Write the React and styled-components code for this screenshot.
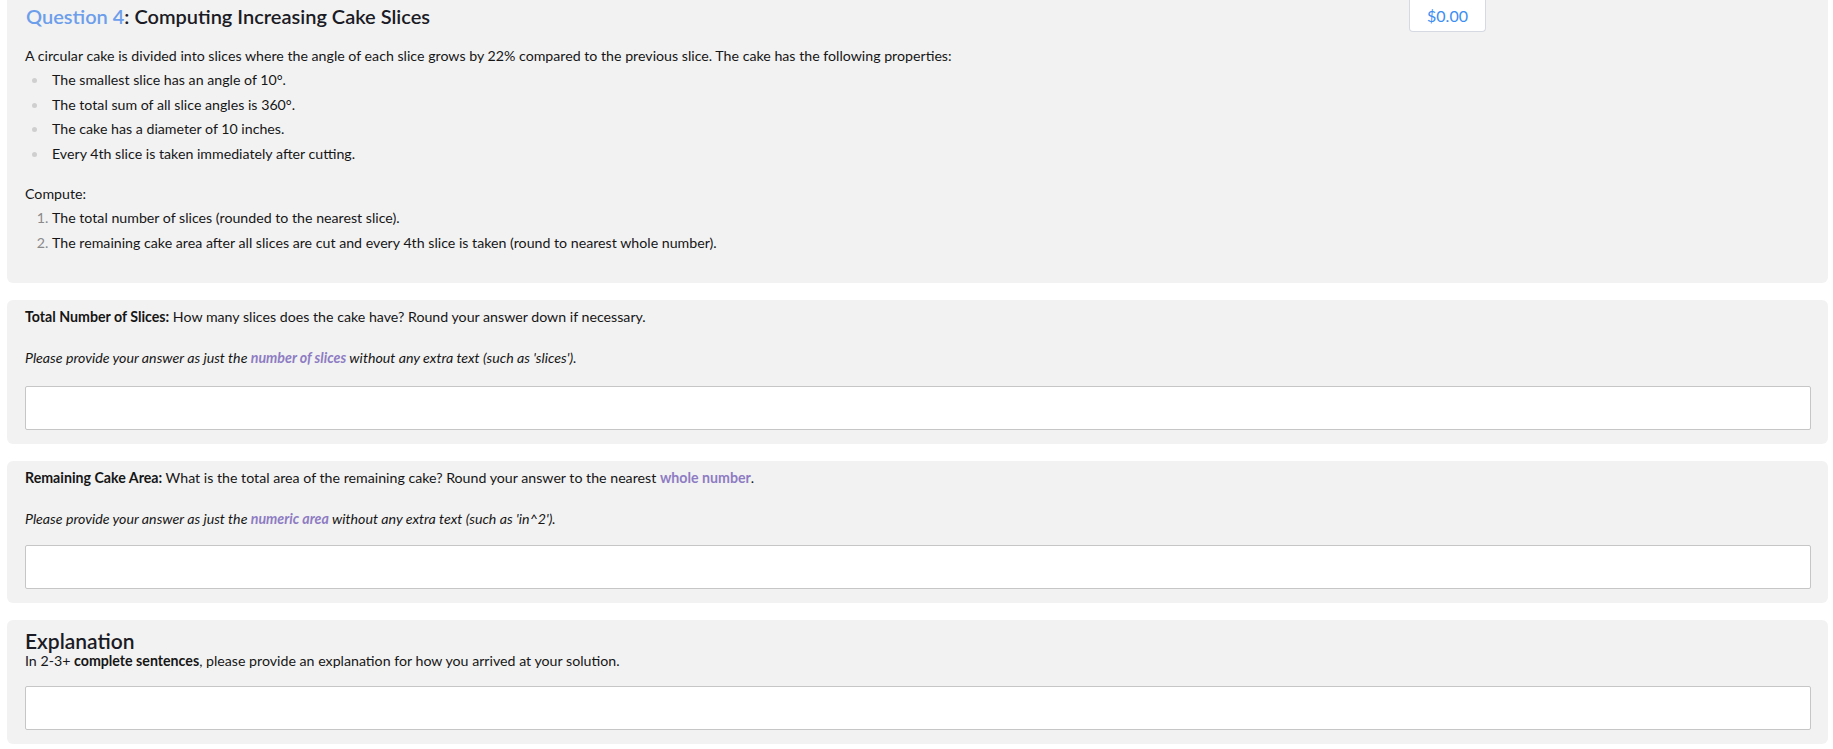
import React from 'react'
import styled, { createGlobalStyle } from 'styled-components'

const GlobalStyle = createGlobalStyle`
  body {
    margin: 0;
    background: #ffffff;
    font-family: Lato, "Liberation Sans", sans-serif;
    color: #161616;
  }
`

const Page = styled.div`
  display: flex;
  flex-direction: column;
  gap: 17px;
  padding: 0 5px 6px 7px;
`

const Card = styled.section`
  background: #f2f2f2;
  border-radius: ${props => (props.top ? '0 0 6px 6px' : '6px')};
  padding: ${props => props.pad || '6px 17px 14px 18px'};
`

const Header = styled.div`
  display: flex;
  align-items: flex-start;
  justify-content: space-between;
`

const Title = styled.h2`
  margin: 0;
  font-size: 20px;
  line-height: 32px;
  font-weight: 600;
  color: #1b1b25;
  padding-left: 1px;
`

const QNum = styled.span`
  color: #6d9eeb;
`

const Money = styled.div`
  width: 75px;
  height: 31px;
  margin-right: 325px;
  background: #ffffff;
  border: 1px solid #d6d9e2;
  border-top: none;
  border-radius: 0 0 4px 4px;
  color: #3b8ef3;
  font-size: 16px;
  line-height: 31px;
  text-align: center;
`

const Text = styled.p`
  margin: ${props => props.mt || 0}px 0 0;
  font-size: 14.2px;
  line-height: ${props => props.lh || 22}px;
  font-style: ${props => (props.italic ? 'italic' : 'normal')};
`

const Bullets = styled.ul`
  margin: 0;
  padding-left: 23px;
  font-size: 14.2px;
  line-height: 24.5px;
  & li {
    padding-left: 4px;
  }
  & li::marker {
    color: #cfcfcf;
  }
`

const Numbers = styled.ol`
  margin: 0;
  padding-left: 27px;
  font-size: 14.2px;
  line-height: 24.5px;
  & li::marker {
    color: #8a8a8a;
  }
`

const Highlight = styled.b`
  color: #8e7cc3;
  font-weight: 700;
`

const Heading = styled.h3`
  margin: 0;
  font-size: 21px;
  line-height: 22px;
  font-weight: 600;
  color: #1b1b25;
`

const Answer = styled.input`
  display: block;
  box-sizing: border-box;
  width: 100%;
  height: 44px;
  margin-top: ${props => props.mt || 17}px;
  background: #ffffff;
  border: 1px solid #c6c6c6;
  border-radius: 2px;
  font-family: inherit;
  font-size: 14px;
  padding: 0 10px;
`

export default function App() {
  return (
    <>
      <GlobalStyle />
      <Page>
        <Card top pad="0 17px 28px 18px">
          <Header>
            <Title>
              <QNum>Question 4</QNum>: Computing Increasing Cake Slices
            </Title>
            <Money>$0.00</Money>
          </Header>
          <Text mt={12} lh={24}>
            A circular cake is divided into slices where the angle of each slice grows by 22% compared to the previous slice. The cake has the following properties:
          </Text>
          <Bullets>
            <li>The smallest slice has an angle of 10°.</li>
            <li>The total sum of all slice angles is 360°.</li>
            <li>The cake has a diameter of 10 inches.</li>
            <li>Every 4th slice is taken immediately after cutting.</li>
          </Bullets>
          <Text mt={16} lh={24}>Compute:</Text>
          <Numbers>
            <li>The total number of slices (rounded to the nearest slice).</li>
            <li>The remaining cake area after all slices are cut and every 4th slice is taken (round to nearest whole number).</li>
          </Numbers>
        </Card>

        <Card>
          <Text>
            <b>Total Number of Slices:</b> How many slices does the cake have? Round your answer down if necessary.
          </Text>
          <Text mt={19} italic>
            Please provide your answer as just the <Highlight>number of slices</Highlight> without any extra text (such as 'slices').
          </Text>
          <Answer type="text" />
        </Card>

        <Card>
          <Text>
            <b>Remaining Cake Area:</b> What is the total area of the remaining cake? Round your answer to the nearest <Highlight>whole number</Highlight>.
          </Text>
          <Text mt={19} italic>
            Please provide your answer as just the <Highlight>numeric area</Highlight> without any extra text (such as 'in^2').
          </Text>
          <Answer type="text" mt={15} />
        </Card>

        <Card pad="10px 17px 14px 18px">
          <Heading>Explanation</Heading>
          <Text lh={18}>
            In 2-3+ <b>complete sentences</b>, please provide an explanation for how you arrived at your solution.
          </Text>
          <Answer type="text" mt={16} />
        </Card>
      </Page>
    </>
  )
}
